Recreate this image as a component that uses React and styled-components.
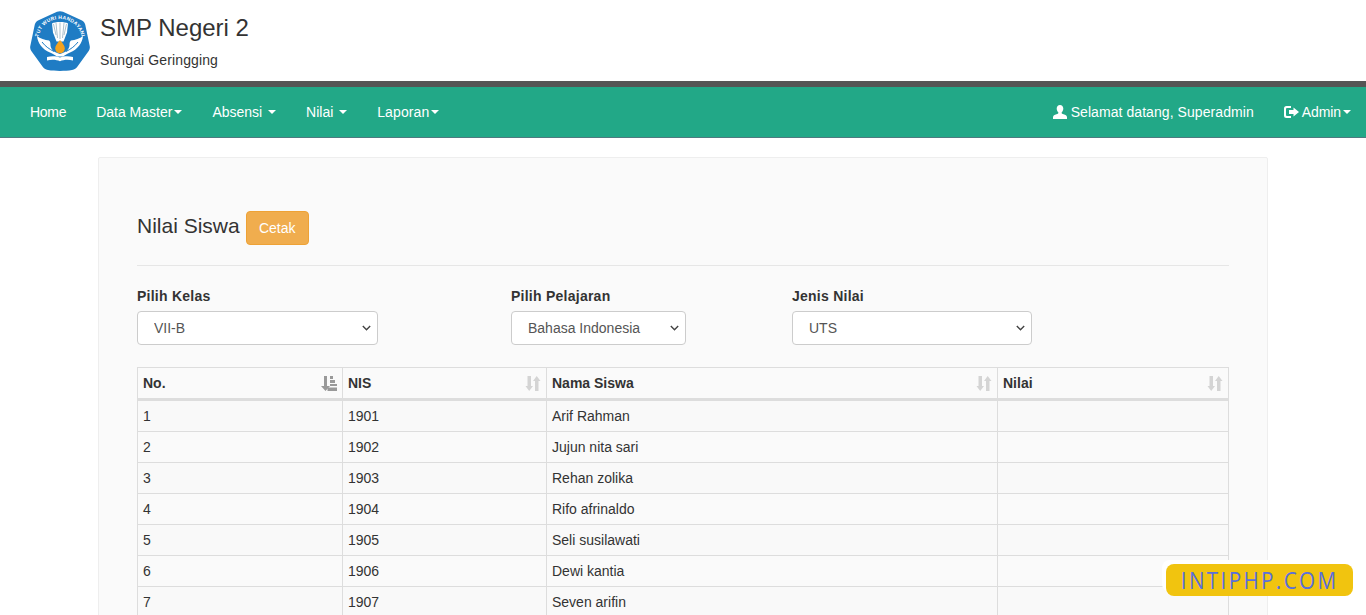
import React from "react";
import styled, { createGlobalStyle } from "styled-components";

const Global = createGlobalStyle`
  * { box-sizing: border-box; }
  html, body { margin: 0; padding: 0; background: #fff; }
  body { font-family: "Liberation Sans", Arial, sans-serif; font-size: 14px; line-height: 20px; color: #333; }
`;
const chevron = "data:image/svg+xml,%3Csvg xmlns='http://www.w3.org/2000/svg' width='9' height='6'%3E%3Cpath d='M.8 1l3.700 3.700L8.200 1' fill='none' stroke='%23444' stroke-width='1.400'/%3E%3C/svg%3E";
const Page = styled.div`height: 615px; overflow: hidden; position: relative;`;
const Header = styled.header`display: flex; align-items: flex-start; height: 81px; padding: 11px 0 0 30px; gap: 10px;`;
const LogoSvg = styled.svg`width: 60px; height: 60px; flex: none;`;
const Brand = styled.div`display: flex; flex-direction: column;`;
const School = styled.h1`margin: 3px 0 0; font-size: 24px; font-weight: 400; line-height: 28px;`;
const Town = styled.p`margin: 8px 0 0; font-size: 14px; line-height: 20px; letter-spacing: .12px;`;
const Navbar = styled.nav`display: flex; justify-content: space-between; height: 57px; padding: 0 0 0 15px; background: #22a887; border-top: 6px solid #555; border-bottom: 1px solid #4f7a80;`;
const NavGroup = styled.div`display: flex;`;
const NavItem = styled.a`display: flex; align-items: center; gap: ${p => p.$gap || 0}px; height: 50px; padding: 0 15px; color: #fff; font-size: 14px; white-space: pre; letter-spacing: ${p => p.$track || 0}px;`;
const Caret = styled.span`display: inline-block; margin-left: 2px; border-top: 4px solid #fff; border-left: 4px solid transparent; border-right: 4px solid transparent;`;
const Main = styled.main`margin: 19px 98px 0; padding: 38px 38px 0; height: 600px; background: #fafafa; border: 1px solid #eee; border-radius: 2px;`;
const TitleRow = styled.div`display: flex; align-items: center; gap: 6px; margin-top: 15px; height: 34px;`;
const Title = styled.h2`margin: 0 0 4px; font-size: 21px; font-weight: 400; line-height: 28px;`;
const Button = styled.button`width: 63px; height: 34px; padding: 0; font: 14px "Liberation Sans", Arial, sans-serif; color: #fff; background: #f0ad4e; border: 1px solid #eea236; border-radius: 4px;`;
const Rule = styled.hr`margin: 20px 0 20px; border: 0; border-top: 1px solid #e6e6e6;`;
const Filters = styled.div`display: flex;`;
const Field = styled.div`width: ${p => p.$span}px; flex: none;`;
const Label = styled.label`display: block; margin-bottom: 5px; font-weight: 700; font-size: 14px; line-height: 20px; letter-spacing: .25px;`;
const Select = styled.select`display: block; appearance: none; width: ${p => p.$w}px; height: 34px; padding: 6px 12px 6px 16px; font: 14px "Liberation Sans", Arial, sans-serif; color: #555; background: #fff url("${chevron}") no-repeat right 6px center; border: 1px solid #ccc; border-radius: 4px;`;
const Table = styled.table`margin-top: 22px; width: 1091px; table-layout: fixed; border-collapse: collapse; border: 1px solid #ddd;`;
const Th = styled.th`width: ${p => p.$w}px; height: 32px; padding: 4px 5px; text-align: left; font-weight: 700; line-height: 20px; border: 1px solid #ddd; border-bottom: 3px solid #ddd;`;
const ThInner = styled.div`display: flex; justify-content: space-between; align-items: center;`;
const Td = styled.td`height: 31px; padding: 5px; line-height: 20px; border: 1px solid #ddd; background: ${p => (p.$odd ? "#f9f9f9" : "transparent")};`;
const SortSvg = styled.svg`width: 16px; height: 15px; flex: none; fill: ${p => (p.$active ? "#999" : "#d4d4d4")};`;
const Badge = styled.div`position: absolute; left: 1166px; top: 564px; width: 187px; height: 32px; display: flex; align-items: center; justify-content: center; background: #f1c40f; border-radius: 8px; box-shadow: -4px -4px 0 0 #fff; color: #5a6fdc; font-family: "Open Sans", sans-serif; font-size: 23px; letter-spacing: 2.6px;`;
const BadgeText = styled.span`display: inline-block; transform: scaleX(.9); white-space: nowrap;`;
const AdminLabel = styled.span`display: inline-flex; align-items: center;`;

const UserIcon = () => (
  <svg width="14" height="14" viewBox="0 0 14 14" fill="#fff"><path d="M7 0c2 0 3.300 1.500 3.300 3.600 0 1.600-.8 3.200-1.700 4 0 .8.300 1.200 1.200 1.500 2 .7 3.900 1.200 4.200 2.900V14H0v-2c.3-1.700 2.200-2.200 4.200-2.900 .9-.3 1.200-.7 1.200-1.500-.9-.8-1.700-2.400-1.700-4C3.700 1.500 5 0 7 0z" /></svg>
);
const LogoutIcon = () => (
  <svg width="15" height="14" viewBox="0 0 15 14" fill="#fff"><path d="M2.500 1H7v2H3a1 1 0 0 0-1 1v6a1 1 0 0 0 1 1h4v2H2.500A2.500 2.500 0 0 1 0 10.500v-7A2.500 2.500 0 0 1 2.500 1z" /><path d="M9.500 2.500 15 7l-5.500 4.500V9H5V5h4.500z" /></svg>
);
const OrderIcon = () => (
  <SortSvg $active viewBox="0 0 16 15"><path d="M3 0h3v10h3l-4.500 5L0 10h3z" /><path d="M9 0h3v3H9zM9 4h5v3H9zM9 8h7v2H9zM6.500 11.500H16V15H6.500z" /></SortSvg>
);
const BothIcon = () => (
  <SortSvg viewBox="0 0 16 15"><path d="M2.500 0h3.500v10h2l-3.800 5L.5 10h2z" /><path d="M10 15h3.500V5h2L11.700 0 8 5h2z" /></SortSvg>
);
const Logo = () => (
  <LogoSvg viewBox="0 0 60 60">
    <path d="M27 .8c2-.9 4-.9 6 0l18.500 8.500c2 1 3.200 2.200 3.700 4.300L59.700 35c.4 2 0 3.500-1 5L47.500 55.500c-1.200 1.700-3 3-5.500 3.500-7 1.200-17 1.200-24 0-2.500-.5-4.300-1.800-5.500-3.500L1.300 40c-1-1.500-1.400-3-1-5L4.800 13.600c.5-2.100 1.700-3.300 3.700-4.300z" fill="#1f7cc4" />
    <path id="logoarc" d="M8 30A22 22 0 0 1 52 30" fill="none" />
    <text fontFamily="Liberation Sans" fontSize="5" fontWeight="700" fill="#fff" letterSpacing=".3" textAnchor="middle"><textPath href="#logoarc" startOffset="50%">TUT WURI HANDAYANI</textPath></text>
    <path d="M22 12.500c3-2 13-2 16 0l-1 9-3.500 9h-7l-3.500-9z" fill="#fff" />
    <path d="M26 12l1.500 15M30 11.500V28M34 12l-1.500 15M23.500 13l2.500 11M36.500 13l-2.500 11" stroke="#8aa6b8" strokeWidth=".7" fill="none" />
    <path d="M7 25c3 2.500 8 4 12 4.500 1.500 1 1.500 3 1.500 5 .5 4 3.500 7 9.500 8.500 6-1.500 9-4.500 9.500-8.500 0-2 0-4 1.500-5 4-.5 9-2 12-4.500-.5 7-5.500 13.500-13 16.500-3 1.300-5 2.500-7 4h-6c-2-1.500-4-2.700-7-4-7.500-3-12.500-9.500-13-16.500z" fill="#fff" />
    <path d="M12 31c3 4 7 7 12 9.500M48 31c-3 4-7 7-12 9.500" stroke="#1f7cc4" strokeWidth="1" fill="none" />
    <path d="M30 29c3 3.500 4.800 6 4.800 8.500a4.800 4.800 0 0 1-9.600 0c0-2.500 1.800-5 4.800-8.500z" fill="#f4a21f" />
    <path d="M17 46c5-1.200 9.500-.8 13 .6 3.500-1.400 8-1.800 13-.6v3.400c-5-1.200-9.500-.8-13 .8-3.500-1.600-8-2-13-.8z" fill="#fff" />
  </LogoSvg>
);

const students = [
  [1, 1901, "Arif Rahman"], [2, 1902, "Jujun nita sari"], [3, 1903, "Rehan zolika"],
  [4, 1904, "Rifo afrinaldo"], [5, 1905, "Seli susilawati"], [6, 1906, "Dewi kantia"], [7, 1907, "Seven arifin"],
];

export default function App() {
  return (
    <Page>
      <Global />
      <Header>
        <Logo />
        <Brand>
          <School>SMP Negeri 2</School>
          <Town>Sungai Geringging</Town>
        </Brand>
      </Header>
      <Navbar>
        <NavGroup>
          <NavItem $track={-0.3}>Home</NavItem>
          <NavItem>Data Master<Caret /></NavItem>
          <NavItem>Absensi <Caret /></NavItem>
          <NavItem>Nilai <Caret /></NavItem>
          <NavItem $track={0.1}>Laporan<Caret /></NavItem>
        </NavGroup>
        <NavGroup>
          <NavItem $gap={4} $track={0.07}><UserIcon />Selamat datang, Superadmin</NavItem>
          <NavItem $gap={3} $track={-0.1}><LogoutIcon /><AdminLabel>Admin<Caret /></AdminLabel></NavItem>
        </NavGroup>
      </Navbar>
      <Main>
        <TitleRow>
          <Title>Nilai Siswa</Title>
          <Button>Cetak</Button>
        </TitleRow>
        <Rule />
        <Filters>
          <Field $span={374}>
            <Label>Pilih Kelas</Label>
            <Select $w={241} defaultValue="VII-B"><option>VII-B</option></Select>
          </Field>
          <Field $span={281}>
            <Label>Pilih Pelajaran</Label>
            <Select $w={175} defaultValue="Bahasa Indonesia"><option>Bahasa Indonesia</option></Select>
          </Field>
          <Field $span={240}>
            <Label>Jenis Nilai</Label>
            <Select $w={240} defaultValue="UTS"><option>UTS</option></Select>
          </Field>
        </Filters>
        <Table>
          <thead>
            <tr>
              <Th $w={205}><ThInner>No.<OrderIcon /></ThInner></Th>
              <Th $w={204}><ThInner>NIS<BothIcon /></ThInner></Th>
              <Th $w={451}><ThInner>Nama Siswa<BothIcon /></ThInner></Th>
              <Th $w={231}><ThInner>Nilai<BothIcon /></ThInner></Th>
            </tr>
          </thead>
          <tbody>
            {students.map(([no, nis, name]) => (
              <tr key={nis}>
                <Td $odd={no % 2 === 1}>{no}</Td>
                <Td $odd={no % 2 === 1}>{nis}</Td>
                <Td $odd={no % 2 === 1}>{name}</Td>
                <Td $odd={no % 2 === 1} />
              </tr>
            ))}
          </tbody>
        </Table>
      </Main>
      <Badge><BadgeText>INTIPHP.COM</BadgeText></Badge>
    </Page>
  );
}
